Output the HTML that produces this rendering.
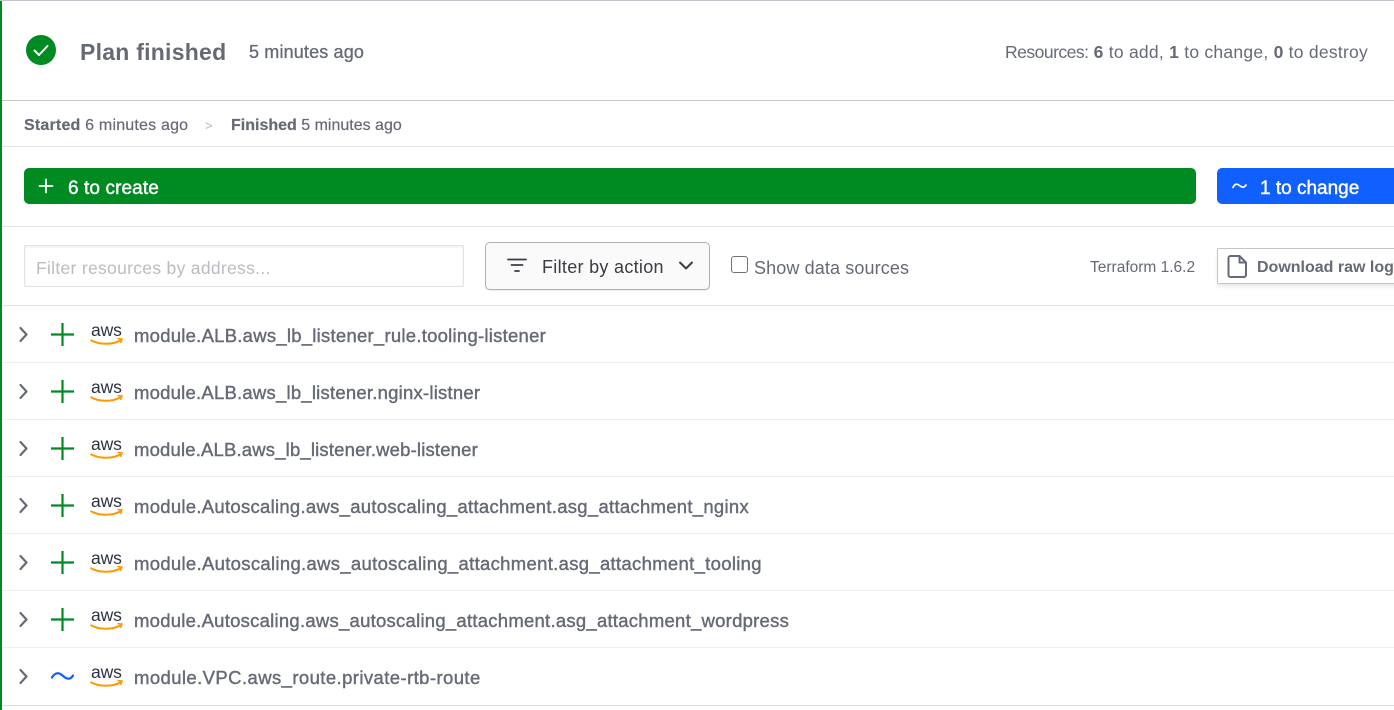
<!DOCTYPE html>
<html lang="en"><head><meta charset="utf-8"><title>Plan finished</title>
<style>
html,body{margin:0;padding:0;background:#fff}
body{width:1394px;height:710px;position:relative;overflow:hidden;font-family:"Liberation Sans",sans-serif;color:#656a76}
.t{position:absolute;white-space:nowrap;line-height:24px}
.l{position:absolute;left:2px;right:0;height:1px}
.s{position:absolute;overflow:visible}
.m{font-size:18.5px;letter-spacing:.25px;color:#656a76;-webkit-text-stroke:.4px #656a76;left:134px}
.a{left:91px;font-size:17.5px;line-height:20px;color:#2b3340;letter-spacing:-.1px}
b{font-weight:700}
</style></head><body>
<div style="position:absolute;left:0;top:0;bottom:0;width:2px;background:#008a22"></div>
<div class="l" style="top:0;left:0;background:#c2c5cb"></div>
<div class="l" style="top:100px;background:#c2c5cb"></div>
<div class="l" style="top:146px;background:#e1e3e6"></div>
<div class="l" style="top:226px;background:#e1e3e6"></div>
<div class="l" style="top:305px;background:#e1e3e6"></div>
<div class="l" style="top:362px;background:#eeeff1"></div>
<div class="l" style="top:419px;background:#eeeff1"></div>
<div class="l" style="top:476px;background:#eeeff1"></div>
<div class="l" style="top:533px;background:#eeeff1"></div>
<div class="l" style="top:590px;background:#eeeff1"></div>
<div class="l" style="top:647px;background:#eeeff1"></div>
<div class="l" style="top:705px;background:#dcdee1"></div>

<svg class="s" style="left:26px;top:35px" width="30" height="30" viewBox="0 0 30 30"><circle cx="15" cy="15" r="15" fill="#008a22"/><path d="M8.5 15.5l4.5 4.5 8.5-9" fill="none" stroke="#fff" stroke-width="2" stroke-linecap="round" stroke-linejoin="round"/></svg>
<div class="t" style="left:80px;top:40px;font-size:23px;font-weight:700;letter-spacing:.25px">Plan finished</div>
<div class="t" style="left:249px;top:40px;font-size:18px;letter-spacing:.15px;-webkit-text-stroke:.3px #656a76">5 minutes ago</div>
<div class="t" style="left:1005px;top:40px;font-size:17.5px;letter-spacing:.25px"><span style="letter-spacing:-.5px">Resources:</span> <b>6</b> to add, <b>1</b> to change, <b>0</b> to destroy</div>

<div class="t" style="left:24px;top:114px;font-size:16px;letter-spacing:.2px;-webkit-text-stroke:.2px #656a76"><b>Started</b> 6 minutes ago</div>
<div class="t" style="left:205px;top:114px;font-size:13px;color:#b5b8be">&gt;</div>
<div class="t" style="left:231px;top:114px;font-size:16px;-webkit-text-stroke:.2px #656a76"><b>Finished</b> 5 minutes ago</div>

<div style="position:absolute;left:24px;top:168px;width:1172px;height:36px;background:#008a22;border-radius:5px"></div>
<svg class="s" style="left:38px;top:178px" width="16" height="16" viewBox="0 0 16 16"><path d="M8 1.500v13M1.500 8h13" stroke="#fff" stroke-width="1.800" stroke-linecap="round"/></svg>
<div class="t" style="left:68px;top:177px;font-size:19px;letter-spacing:.1px;color:#fff;-webkit-text-stroke:.4px #fff">6 to create</div>

<div style="position:absolute;left:1217px;top:168px;width:190px;height:36px;background:#1060ff;border-radius:5px"></div>
<svg class="s" style="left:1232px;top:180px" width="15" height="12" viewBox="0 0 15 12"><path d="M1 7.500C3 3.500 5 3.500 7.500 5.500S12 8 14 5" fill="none" stroke="#fff" stroke-width="1.700" stroke-linecap="round"/></svg>
<div class="t" style="left:1260px;top:177px;font-size:19px;color:#fff;-webkit-text-stroke:.4px #fff">1 to change</div>

<div style="position:absolute;left:24px;top:245px;width:438px;height:40px;border:1px solid #e1e3e6;border-radius:2px;box-shadow:inset 0 1px 2px rgba(0,0,0,.08)"></div>
<div class="t" style="left:36px;top:256px;font-size:17.5px;letter-spacing:.3px;color:#b9bcc1">Filter resources by address...</div>

<div style="position:absolute;left:485px;top:242px;width:223px;height:46px;border:1px solid #aeb0b5;border-radius:5px;background:#fafafa;box-shadow:0 1px 1px rgba(0,0,0,.08)"></div>
<svg class="s" style="left:507px;top:258px" width="20" height="16" viewBox="0 0 20 16"><path d="M1 1.500h18M4.500 7h11M8 13h4" stroke="#3b3d45" stroke-width="1.800" stroke-linecap="round"/></svg>
<div class="t" style="left:542px;top:255px;font-size:18px;letter-spacing:.3px;color:#3b3d45">Filter by action</div>
<svg class="s" style="left:678px;top:260px" width="16" height="12" viewBox="0 0 16 12"><path d="M2 2.500l6 6 6-6" fill="none" stroke="#3b3d45" stroke-width="2" stroke-linecap="round" stroke-linejoin="round"/></svg>

<div style="position:absolute;left:731px;top:256px;width:15px;height:15px;border:1px solid #6d7078;border-radius:3px"></div>
<div class="t" style="left:754px;top:256px;font-size:18px;letter-spacing:.12px">Show data sources</div>

<div class="t" style="left:1090px;top:256px;font-size:15.500px">Terraform 1.6.2</div>
<div style="position:absolute;left:1217px;top:248px;width:190px;height:34px;border:1px solid #c2c5cb;border-radius:2px;box-shadow:0 3px 3px rgba(0,0,0,.08);background:#fff"></div>
<svg class="s" style="left:1227px;top:255px" width="21" height="23" viewBox="0 0 21 23"><path d="M3.500 1h9l6.500 6.500V20a2 2 0 0 1-2 2H3.500a2 2 0 0 1-2-2V3a2 2 0 0 1 2-2zM12.500 1v6.500H19" fill="none" stroke="#656a76" stroke-width="2" stroke-linejoin="round"/></svg>
<div class="t" style="left:1257px;top:256px;font-size:16px;font-weight:700">Download raw log</div>

<svg width="0" height="0" style="position:absolute"><defs>
<g id="chev"><path d="M1.500 1l6 6.500-6 6.500" fill="none" stroke="#656a76" stroke-width="2.200" stroke-linecap="round" stroke-linejoin="round"/></g>
<g id="plus"><path d="M11.500 0v23M0 11.500h23" stroke="#008a22" stroke-width="2.200"/></g>
<g id="swoosh"><path d="M.5 3C9 8 23 8 31 3" fill="none" stroke="#f90" stroke-width="2"/><path d="M27.500 1.500L32 2l-1.500 4" fill="none" stroke="#f90" stroke-width="1.500"/></g>
</defs></svg>

<svg class="s" style="left:19px;top:327px" width="10" height="15"><use href="#chev"/></svg>
<svg class="s" style="left:51px;top:323px" width="23" height="23"><use href="#plus"/></svg>
<div class="t a" style="top:320px">aws</div>
<svg class="s" style="left:90px;top:337px" width="33" height="9"><use href="#swoosh"/></svg>
<div class="t m" style="top:324px">module.ALB.aws_lb_listener_rule.tooling-listener</div>

<svg class="s" style="left:19px;top:384px" width="10" height="15"><use href="#chev"/></svg>
<svg class="s" style="left:51px;top:380px" width="23" height="23"><use href="#plus"/></svg>
<div class="t a" style="top:377px">aws</div>
<svg class="s" style="left:90px;top:394px" width="33" height="9"><use href="#swoosh"/></svg>
<div class="t m" style="top:381px;letter-spacing:.225px">module.ALB.aws_lb_listener.nginx-listner</div>

<svg class="s" style="left:19px;top:441px" width="10" height="15"><use href="#chev"/></svg>
<svg class="s" style="left:51px;top:437px" width="23" height="23"><use href="#plus"/></svg>
<div class="t a" style="top:434px">aws</div>
<svg class="s" style="left:90px;top:451px" width="33" height="9"><use href="#swoosh"/></svg>
<div class="t m" style="top:438px;letter-spacing:.17px">module.ALB.aws_lb_listener.web-listener</div>

<svg class="s" style="left:19px;top:498px" width="10" height="15"><use href="#chev"/></svg>
<svg class="s" style="left:51px;top:494px" width="23" height="23"><use href="#plus"/></svg>
<div class="t a" style="top:491px">aws</div>
<svg class="s" style="left:90px;top:508px" width="33" height="9"><use href="#swoosh"/></svg>
<div class="t m" style="top:495px;letter-spacing:.28px">module.Autoscaling.aws_autoscaling_attachment.asg_attachment_nginx</div>

<svg class="s" style="left:19px;top:555px" width="10" height="15"><use href="#chev"/></svg>
<svg class="s" style="left:51px;top:551px" width="23" height="23"><use href="#plus"/></svg>
<div class="t a" style="top:548px">aws</div>
<svg class="s" style="left:90px;top:565px" width="33" height="9"><use href="#swoosh"/></svg>
<div class="t m" style="top:552px;letter-spacing:.31px">module.Autoscaling.aws_autoscaling_attachment.asg_attachment_tooling</div>

<svg class="s" style="left:19px;top:612px" width="10" height="15"><use href="#chev"/></svg>
<svg class="s" style="left:51px;top:608px" width="23" height="23"><use href="#plus"/></svg>
<div class="t a" style="top:605px">aws</div>
<svg class="s" style="left:90px;top:622px" width="33" height="9"><use href="#swoosh"/></svg>
<div class="t m" style="top:609px">module.Autoscaling.aws_autoscaling_attachment.asg_attachment_wordpress</div>

<svg class="s" style="left:19px;top:669px" width="10" height="15"><use href="#chev"/></svg>
<svg class="s" style="left:51px;top:670px" width="23" height="13" viewBox="0 0 23 13"><path d="M1 7.500C4 2.500 7.500 2 11.500 5.500S19 10.500 22 5.500" fill="none" stroke="#1060ff" stroke-width="2.200" stroke-linecap="round"/></svg>
<div class="t a" style="top:662px">aws</div>
<svg class="s" style="left:90px;top:679px" width="33" height="9"><use href="#swoosh"/></svg>
<div class="t m" style="top:666px;letter-spacing:.41px">module.VPC.aws_route.private-rtb-route</div>
</body></html>
